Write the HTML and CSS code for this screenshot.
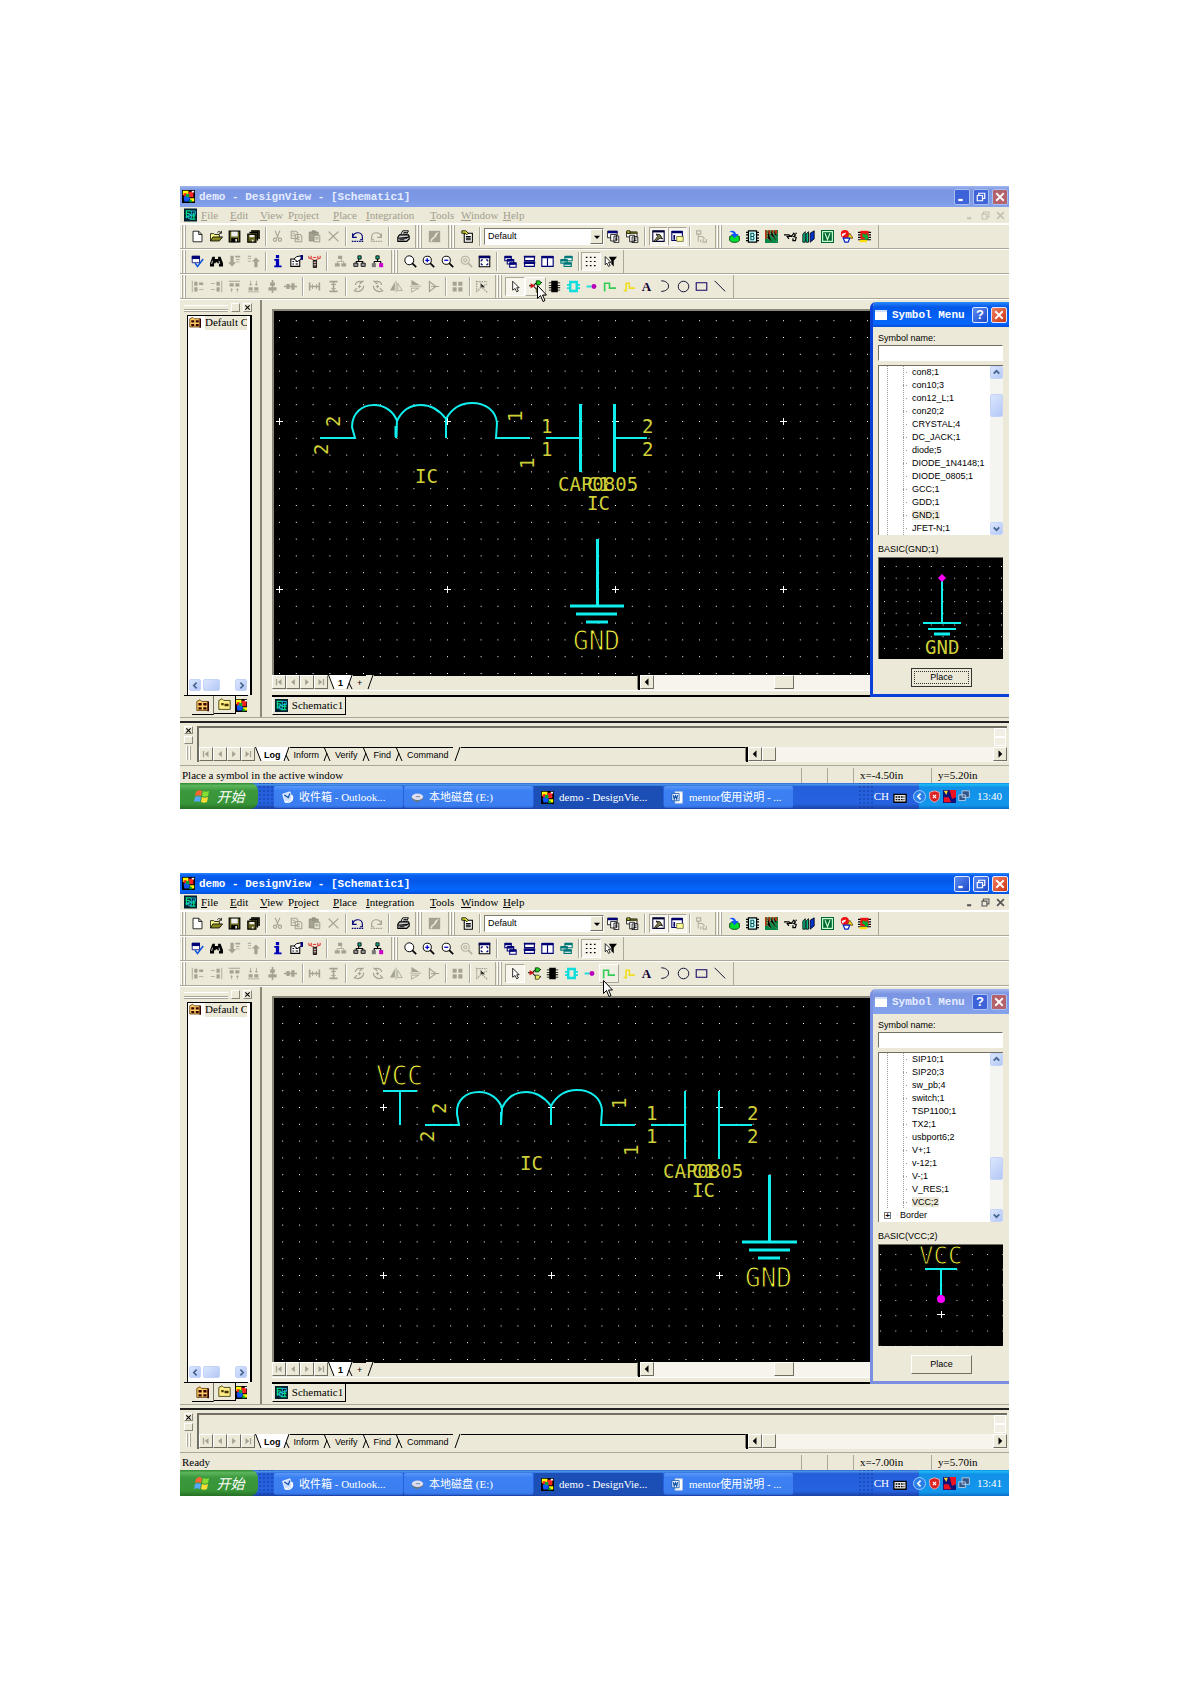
FILE: index.html
```html
<!DOCTYPE html>
<html lang="zh-CN">
<head>
<meta charset="utf-8">
<title>DesignView</title>
<link rel="stylesheet" href="styles.css">
</head>
<body>
<svg class="defs" aria-hidden="true">
  <defs>
    <pattern id="grid1" patternUnits="userSpaceOnUse" x="278" y="421" width="16.8" height="16.8"><rect width="1" height="1" fill="#fff"/></pattern>
    <pattern id="grid2" patternUnits="userSpaceOnUse" x="382" y="420" width="16.8" height="16.8"><rect width="1" height="1" fill="#fff"/></pattern>
    <pattern id="grid3" patternUnits="userSpaceOnUse" x="5" y="8" width="11.7" height="11.7"><rect width="1" height="1" fill="#ddd"/></pattern>
    <pattern id="grid4" patternUnits="userSpaceOnUse" x="1" y="9" width="15.3" height="15.3"><rect width="1" height="1" fill="#ddd"/></pattern>
  </defs>
  <symbol id="app" viewBox="0 0 16 16"><path fill="#000" d="M0 0h16v16H0z"/><path fill="#ff0" d="M1 1h7v5H1zM10 10h5v4h-5z"/><path fill="#f22" d="M8 2h6v7H8zM2 4h4v4H2z"/><path fill="#15f" d="M2 9l4-3 4 4-2 4H3z"/><path fill="#0a3" d="M5 5h4v4H5zM9 12h3v3H9z"/><path fill="#fff" d="M12 1h3v2h-3z"/></symbol>
  <symbol id="sch" viewBox="0 0 16 16"><path fill="#002030" d="M0 0h16v16H0z"/><path fill="none" stroke="#0d8" stroke-width="1.5" d="M2 3h7M2 6h4l3 3h5M2 10h5M7 13h7M3 3v9M12 5v8"/><path fill="none" stroke="#2cf" d="M9 3h5v4H9zM5 8h4v4H5z"/></symbol>
  <symbol id="new" viewBox="0 0 16 16"><path fill="#fff" stroke="#000" d="M2.500 1.500h7l4 4v9h-11zM9.500 1.500v4h4"/></symbol>
  <symbol id="open" viewBox="0 0 16 16"><path fill="#ff8" stroke="#000" d="M.5 13.500v-9h4l1 1h6v3"/><path fill="#882" stroke="#000" d="M.5 13.500l3-5h12l-4 5z"/><path fill="none" stroke="#000" d="M9 3c2-2 4-1 5 1M14 1v3h-3"/></symbol>
  <symbol id="save" viewBox="0 0 16 16"><path fill="#662" stroke="#000" stroke-width="1.500" d="M1.500 1.500h13v13h-13z"/><path fill="#eee" d="M4 2h8v6H4z"/><path d="M4 10h8v5H4z"/><path fill="#eee" d="M9 11h2v3H9z"/></symbol>
  <symbol id="saveall" viewBox="0 0 16 16"><path fill="#662" stroke="#000" stroke-width="1.500" d="M5 1h10v10M3 3h10v10M1 5h10v10H1z"/><path fill="#eee" d="M3 6h6v3H3zM6 12h2v2H6z"/></symbol>
  <symbol id="cut" viewBox="0 0 16 16"><g fill="none" stroke="#a5a292" stroke-width="1.300"><path d="M5 1l4 9M11 1L7 10"/><circle cx="5" cy="12" r="2"/><circle cx="11" cy="12" r="2"/></g></symbol>
  <symbol id="copy" viewBox="0 0 16 16"><path fill="#ece9d8" stroke="#a5a292" stroke-width="1.300" d="M1.500 1.500h6l2 2v7h-8zM6.500 5.500h6l2 2v7h-8zM8 9h4M8 12h4M3 4h3M3 7h3"/></symbol>
  <symbol id="paste" viewBox="0 0 16 16"><path fill="#a5a292" stroke="#8e8b7c" d="M1.500 2.500h11v11h-11zM5 1h4v3H5z"/><path fill="#ece9d8" stroke="#8e8b7c" d="M7.500 6.500h7v8h-7zM9 9h4M9 11h4"/></symbol>
  <symbol id="del" viewBox="0 0 16 16"><path stroke="#a5a292" stroke-width="1.600" d="M2 2l12 12M14 2L2 13"/></symbol>
  <symbol id="undo" viewBox="0 0 16 16"><path fill="none" stroke="#007" stroke-width="1.400" d="M2 4v5h5M2 9c2-8 12-7 12 0v3h-3"/><path stroke="#007" stroke-dasharray="2 1" stroke-width="1.500" d="M1 14h14"/></symbol>
  <symbol id="redo" viewBox="0 0 16 16"><path fill="none" stroke="#a5a292" stroke-width="1.400" d="M14 4v5H9M14 9C12 1 2 2 2 9v3h3"/><path stroke="#a5a292" stroke-dasharray="2 1" stroke-width="1.500" d="M1 14h14"/></symbol>
  <symbol id="print" viewBox="0 0 16 16"><path fill="#fff" stroke="#000" stroke-width="1.200" d="M4 7l3-6h7l-3 6"/><path fill="#ccc" stroke="#000" stroke-width="1.400" d="M1 9l2-3h11l1 2v3l-3 3H1z"/><path stroke="#000" stroke-width="1.200" d="M1 10h11l3-2M8 3h4M7 5h4M3 12h6"/></symbol>
  <symbol id="pic" viewBox="0 0 16 16"><path fill="#a5a292" d="M1 1h14v14H1z"/><path fill="#ece9d8" d="M3 14c1-6 4-4 5-7 1-4 4-4 6-5-3 2-3 5-5 7s-4 2-4 5z"/></symbol>
  <symbol id="sheet" viewBox="0 0 16 16"><path fill="#fff" stroke="#000" stroke-width="1.300" d="M4 4h10v11H4z"/><path stroke="#000" stroke-width="1.300" d="M6 8h6M6 10h6M6 12h6"/><path fill="#dd3" stroke="#000" d="M1 1h5l3 3-2 2-2-2H1z"/></symbol>
  <symbol id="wins" viewBox="0 0 16 16"><path fill="#fff" stroke="#000" d="M.5 1.500h12v8H.5z"/><path fill="#007" d="M1 1h12v3H1z"/><path fill="#fff" stroke="#000" d="M4.500 5.500h7v8h-7zM8.500 7.500h6v8h-6zM10 10h3M10 12h3"/></symbol>
  <symbol id="wins2" viewBox="0 0 16 16"><path fill="#fff" stroke="#000" d="M.5 2.500h13v6H.5z"/><path fill="#552" d="M1 2h13v3H1z"/><path fill="#dd3" stroke="#000" d="M1 1h4v3H1z"/><path fill="#fff" stroke="#000" d="M4.500 6.500h6v8h-6zM7.500 8.500h7v7h-7zM9 11h4M9 13h4"/></symbol>
  <symbol id="nav" viewBox="0 0 16 16"><path fill="#fff" stroke="#003" stroke-width="1.300" d="M1 1h14v13H1z"/><path fill="#003" d="M1 1h14v2H1z"/><path fill="#885" stroke="#000" d="M5 5l5 1 3 5-3-1-6 4-1-1 4-5z"/></symbol>
  <symbol id="outp" viewBox="0 0 16 16"><path fill="#fff" stroke="#006" stroke-width="1.300" d="M1 2h13v11H1z"/><path fill="#006" d="M1 1h13v3H1zM3 6h2v6H3z"/><path fill="#ff9" stroke="#663" d="M7 8h8v6H7z"/></symbol>
  <symbol id="info" viewBox="0 0 16 16"><g fill="none" stroke="#b4b1a0" stroke-width="1.400"><path d="M2 1h5v4H2zM4 5v9M4 8h5l3 3M7 12v3M10 11v4h4v-4"/></g></symbol>
  <symbol id="disk" viewBox="0 0 16 16"><path fill="#0d3" stroke="#030" d="M2 8v5c2 3 10 3 12 0V8c-3-2-9-2-12 0z"/><path fill="#15f" d="M1 3c4-4 8-2 9 2h3l-5 5-4-5h3C6 3 4 2 1 3z"/></symbol>
  <symbol id="chipB" viewBox="0 0 16 16"><path stroke="#000" stroke-width="1.400" d="M0 3h16M0 6h16M0 10h16M0 13h16"/><path fill="#cff" stroke="#000" stroke-width="1.500" d="M3 1h10v14H3z"/><path fill="none" stroke="#055" stroke-width="1.300" d="M6 4h3l1 2-1 2H6zM6 8h3l1 2-1 2H6z"/></symbol>
  <symbol id="pcb" viewBox="0 0 16 16"><path fill="#084" d="M0 0h16v16H0z"/><path fill="#b31" d="M0 0h2v11H0zM4 0h2v6H4zM8 0h2v4H8zM12 0h3v5h-3z"/><path stroke="#fc9" stroke-dasharray="1 1" d="M3 0v10l5 5M11 0v5l4 4M7 0v6l7 8"/></symbol>
  <symbol id="gate" viewBox="0 0 16 16"><path fill="none" stroke="#000" stroke-width="1.500" d="M0 6h6l3 2H4l2 3M9 8l3-4 2 2-2 2 3 1-1 4h-3v-3M14 4h2"/></symbol>
  <symbol id="books" viewBox="0 0 16 16"><path fill="#0b8" stroke="#000" d="M1 5l3-3v13H1zM5 5l3-3v13H5z"/><path fill="#03c" stroke="#000" d="M10 4l5-3v10l-5 4z"/></symbol>
  <symbol id="vv" viewBox="0 0 16 16"><path fill="#063" d="M0 0h16v16H0z"/><path fill="none" stroke="#cfc" stroke-width="1.400" d="M2 2h12v12H2zM5 4l3 8 3-8"/></symbol>
  <symbol id="ball" viewBox="0 0 16 16"><circle cx="6" cy="5" r="5" fill="#e11"/><path fill="#fd2" stroke="#640" d="M9 10l3-6 4 6z"/><path fill="#fff" stroke="#02c" stroke-width="1.500" d="M4 10h8l-2 5H6z"/><path fill="#fff" d="M2 5l5-2v2L3 8z"/></symbol>
  <symbol id="chipR" viewBox="0 0 16 16"><path stroke="#000" stroke-width="1.400" d="M0 3h16M0 6h16M0 9h16M0 12h16"/><path fill="#e11" d="M3 1h10v10H3z"/><path fill="#fd0" d="M2 12h9v3H2z"/><path fill="#0a3" d="M6 4l4 2 1-3 2 8-5 1 1-2-4-2z"/></symbol>
  <symbol id="chk" viewBox="0 0 16 16"><path fill="#fff" stroke="#007" d="M1.500 1.500h9v8h-9z"/><path fill="#007" d="M1 1h10v4H1z"/><path fill="none" stroke="#15d" stroke-width="2" d="M5 10l3 4 7-9"/></symbol>
  <symbol id="find" viewBox="0 0 16 16"><path d="M3 2h3v3h4V2h3l3 8v4h-5v-4H9V9H7v1H5v4H0v-4z"/><path stroke="#fff" d="M3 7l-1 4M11 7l1 4"/></symbol>
  <symbol id="down" viewBox="0 0 16 16"><path fill="#a5a292" d="M3 1h4v8h3l-5 5-5-5h3zM9 1h6v2H9zM10 5h4v1h-4zM10 8h4v1h-4z"/></symbol>
  <symbol id="up" viewBox="0 0 16 16"><path fill="#a5a292" d="M9 15h4V8h3l-5-5-5 5h3zM1 1h4v1H1zM1 4h4v1H1zM1 7h4v1H1z"/></symbol>
  <symbol id="i" viewBox="0 0 16 16"><path fill="#00b" d="M6 0h4v4H6zM4 5h6v8h3v2H4v-2h2V7H4z"/></symbol>
  <symbol id="prop" viewBox="0 0 16 16"><path fill="#fff" stroke="#000" stroke-width="1.300" d="M1 5h11v9H1zM3 8h2M7 8h3M3 11h2M7 11h3"/><path fill="#fff" stroke="#000" stroke-width="1.200" d="M5 5l3-3 6-1v4l-5 3z"/><path fill="#007" d="M13 0h3v6h-3z"/></symbol>
  <symbol id="sig" viewBox="0 0 16 16"><path fill="none" stroke="#d33" stroke-width="1.200" d="M1 1v3h3V1M6 3h4M12 1v3h3V1M2 4l5 2M14 4l-4 2"/><path fill="#533" stroke="#000" d="M6.500 6.500h4v9h-4z"/><path stroke="#fff" d="M7 9h3M7 12h3"/></symbol>
  <symbol id="tree0" viewBox="0 0 16 16"><path fill="none" stroke="#a5a292" d="M9 5v3M4 11V8h8v3"/><path fill="#a5a292" d="M5 1h5v4H5zM1 10h6v4H1zM9 10h6v4H9z"/></symbol>
  <symbol id="tree1" viewBox="0 0 16 16"><path fill="none" stroke="#000" stroke-width="1.300" d="M7 5v3M4 11V8h8v3"/><path fill="#1a8" stroke="#000" d="M6 1h4v4H6z"/><path fill="#999" stroke="#000" d="M1 10h5v4H1zM10 10h5v4h-5z"/></symbol>
  <symbol id="tree2" viewBox="0 0 16 16"><path fill="none" stroke="#000" stroke-width="1.300" d="M8 5v3M4 11V8h8v3"/><path fill="#1a8" stroke="#000" d="M6 1h4v4H6z"/><path fill="#777" d="M1 10h5v5H1z"/><path fill="#c0c" d="M10 10h5v5h-5z"/></symbol>
  <symbol id="zoom" viewBox="0 0 16 16"><circle cx="6.500" cy="6.500" r="5.500" fill="#fff" stroke="#000" stroke-width="1.200"/><path stroke="#000" stroke-width="2" d="M10 10l5 5"/></symbol>
  <symbol id="zin" viewBox="0 0 16 16"><circle cx="6.500" cy="6.500" r="5" fill="#fff" stroke="#000" stroke-width="1.200"/><path stroke="#000" stroke-width="2" d="M10 10l5 5"/><path stroke="#00c" stroke-width="1.600" d="M4 6.500h5M6.500 4v5"/></symbol>
  <symbol id="zout" viewBox="0 0 16 16"><circle cx="6.500" cy="6.500" r="5" fill="#fff" stroke="#000" stroke-width="1.200"/><path stroke="#000" stroke-width="2" d="M10 10l5 5"/><path stroke="#00c" stroke-width="1.600" d="M4 6.500h5"/></symbol>
  <symbol id="zsel" viewBox="0 0 16 16"><g fill="none" stroke="#b4b1a0" stroke-width="1.300"><circle cx="6.500" cy="6.500" r="5"/><circle cx="6.500" cy="6.500" r="2"/><path stroke-width="2" d="M10 10l5 5"/></g></symbol>
  <symbol id="zfit" viewBox="0 0 16 16"><path fill="#fff" stroke="#000" stroke-width="1.300" d="M1.500 1.500h13v13h-13z"/><path fill="#006" d="M1 1h14v3H1z"/><path fill="none" stroke="#006" stroke-width="1.400" d="M4 6v2M4 6h2M12 6h-2M12 6v2M4 12h2M4 12v-2M12 12h-2M12 12v-2"/></symbol>
  <symbol id="casc" viewBox="0 0 16 16"><path fill="#fff" stroke="#007" stroke-width="1.300" d="M1 2h8v5H1zM4 6h8v5H4zM7 10h8v5H7z"/><path fill="#007" d="M1 1h8v3H1zM4 5h8v3H4zM7 9h8v3H7z"/></symbol>
  <symbol id="horz" viewBox="0 0 16 16"><path fill="#fff" stroke="#007" stroke-width="1.400" d="M2 2h12v5H2zM2 9h12v5H2z"/><path fill="#007" d="M1 1h14v2H1zM1 8h14v3H1z"/></symbol>
  <symbol id="vert" viewBox="0 0 16 16"><path fill="#fff" stroke="#007" stroke-width="1.400" d="M1 2h7v12H1zM8 2h7v12H8z"/><path fill="#007" d="M1 1h14v3H1z"/></symbol>
  <symbol id="arr" viewBox="0 0 16 16"><path fill="#fff" stroke="#077" stroke-width="1.300" d="M6 2h9v5H6zM1 6h8v4H1zM5 10h9v4H5z"/><path fill="#077" d="M6 1h9v3H6zM1 5h8v3H1zM5 9h9v3H5z"/></symbol>
  <symbol id="dots" viewBox="0 0 16 16"><path stroke="#000" stroke-width="1.500" stroke-dasharray="2 3" d="M1 3h14M1 8h14M1 13h14"/></symbol>
  <symbol id="filt" viewBox="0 0 16 16"><path fill="#fff" stroke="#000" d="M1.500 2v10l2-2 2 4 2-1-2-4h3z"/><path d="M6 2h10l-4 5v7l-3-3V7z"/></symbol>
  <symbol id="al1" viewBox="0 0 16 16"><path fill="#a5a292" d="M1 1h1v14H1zM4 2h4v5H4zM10 3h5v3h-5zM4 9h4v5H4zM10 11h5v1h-5z"/></symbol>
  <symbol id="al2" viewBox="0 0 16 16"><path fill="#a5a292" d="M14 1h1v14h-1zM8 2h4v5H8zM1 4h5v1H1zM8 9h4v5H8zM1 11h5v1H1z"/></symbol>
  <symbol id="al3" viewBox="0 0 16 16"><path fill="#a5a292" d="M1 1h14v1H1zM2 4h5v4H2zM9 4h5v4H9zM4 10h1v5H4zM11 10h1v5h-1zM3 11h3v1H3zM10 11h3v1h-3z"/></symbol>
  <symbol id="al4" viewBox="0 0 16 16"><path fill="#a5a292" d="M1 14h14v1H1zM2 9h5v4H2zM9 9h5v4H9zM4 1h1v6H4zM11 1h1v6h-1zM3 5h3v1H3zM10 5h3v1h-3z"/></symbol>
  <symbol id="al5" viewBox="0 0 16 16"><path fill="#a5a292" d="M7 0h2v16H7zM5 3h6v4H5zM3 9h10v4H3z"/></symbol>
  <symbol id="al6" viewBox="0 0 16 16"><path fill="#a5a292" d="M0 7h16v2H0zM3 5h4v6H3zM9 4h4v8H9z"/></symbol>
  <symbol id="sp1" viewBox="0 0 16 16"><path fill="#a5a292" d="M1 3h2v10H1zM13 3h2v10h-2zM3 7h10v2H3zM5 5h1v6H5zM10 5h1v6h-1z"/></symbol>
  <symbol id="sp2" viewBox="0 0 16 16"><path fill="#a5a292" d="M3 1h10v2H3zM3 13h10v2H3zM7 3h2v10H7zM5 5h6v1H5zM5 10h6v1H5z"/></symbol>
  <symbol id="rot1" viewBox="0 0 16 16"><path fill="none" stroke="#a5a292" stroke-width="1.500" d="M2 13c4 3 11 0 11-6M11 2C6 1 3 3 3 6M6 8h4M8 6v4M13 1L8 5M5 10l-4 4"/></symbol>
  <symbol id="rot2" viewBox="0 0 16 16"><path fill="none" stroke="#a5a292" stroke-width="1.500" d="M14 13c-4 3-11 0-11-6M5 2c5-1 8 1 8 4M6 8h4M8 6v4M3 1l5 4M11 10l4 4"/></symbol>
  <symbol id="fl1" viewBox="0 0 16 16"><path fill="#a5a292" d="M6 2v11H0zM7 1h1v14H7z"/><path fill="none" stroke="#a5a292" d="M9.500 4v9H15z"/></symbol>
  <symbol id="fl2" viewBox="0 0 16 16"><path fill="#a5a292" d="M3 0l10 6H3zM1 7h14v1H1z"/><path fill="none" stroke="#a5a292" d="M3 15l9-5H3z"/></symbol>
  <symbol id="fl3" viewBox="0 0 16 16"><path fill="none" stroke="#a5a292" stroke-width="1.500" d="M3 1v14M3 2l8 6-8 6M5 8h10"/></symbol>
  <symbol id="grp" viewBox="0 0 16 16"><path fill="#a5a292" d="M2 2h5v5H2zM9 2h5v5H9zM2 9h5v5H2zM9 9h5v5H9z"/></symbol>
  <symbol id="snap" viewBox="0 0 16 16"><path fill="none" stroke="#a5a292" stroke-width="1.500" stroke-dasharray="2 1" d="M2 1v14M2 2h13M15 15l-8-7M15 5L8 8l-5 6"/><path stroke="#a5a292" stroke-width="1.500" d="M7 4v5h5"/></symbol>
  <symbol id="ptr" viewBox="0 0 16 16"><path fill="#fff" stroke="#000" d="M4.500 1.500v11l3-2 2 4 2-1-2-4h3z"/></symbol>
  <symbol id="part" viewBox="0 0 16 16"><path fill="none" stroke="#000" stroke-width="1.300" d="M0 7h5M6 6l4-3M6 8l4 4M14 3h2M14 12h2"/><path fill="#c11" d="M2 4l6 3-6 3z"/><path fill="#2c2" stroke="#030" d="M9 1h4l2 2-2 3H9z"/><path fill="#ee6" stroke="#330" d="M9 10h4l2 2-2 3H9z"/></symbol>
  <symbol id="ic" viewBox="0 0 16 16"><path d="M4 1h8v14H4zM1 3h14v1H1zM1 6h14v1H1zM1 9h14v1H1zM1 12h14v1H1z"/></symbol>
  <symbol id="blk" viewBox="0 0 16 16"><path fill="none" stroke="#1dd" stroke-width="3" d="M4 2.500h8v11H4z"/><path stroke="#1dd" stroke-width="2" d="M0 6h3M0 10h3M13 6h3M13 10h3"/></symbol>
  <symbol id="pin" viewBox="0 0 16 16"><path stroke="#2dd" stroke-width="2.500" d="M2 8h6"/><circle cx="11" cy="8" r="3" fill="#b0b"/></symbol>
  <symbol id="net" viewBox="0 0 16 16"><path fill="none" stroke="#3c5" stroke-width="2" d="M2 14V4h6v6h8"/></symbol>
  <symbol id="bus" viewBox="0 0 16 16"><path fill="none" stroke="#ed2" stroke-width="2" d="M2 13h3V4h4v6h7"/></symbol>
  <symbol id="arc" viewBox="0 0 16 16"><path fill="none" stroke="#113" stroke-width="1.200" d="M4 1c12 0 12 13 0 13"/></symbol>
  <symbol id="circ" viewBox="0 0 16 16"><circle cx="8" cy="8" r="6.500" fill="none" stroke="#113" stroke-width="1.200"/></symbol>
  <symbol id="rect" viewBox="0 0 16 16"><path fill="none" stroke="#106" stroke-width="1.300" d="M1.500 3.500h13v9h-13z"/></symbol>
  <symbol id="line" viewBox="0 0 16 16"><path stroke="#113" stroke-width="1.200" d="M2 1l13 13"/></symbol>
  <symbol id="cursor" viewBox="0 0 10 17"><path fill="#fff" stroke="#000" d="M.5.5v13l3-3 2.500 6 2-1-2.500-5.500h4z"/></symbol>
  <symbol id="min" viewBox="0 0 16 16"><path stroke="currentColor" stroke-width="3" d="M3 12h6"/></symbol>
  <symbol id="rest" viewBox="0 0 16 16"><path fill="none" stroke="currentColor" stroke-width="1.600" d="M5 6V3h8v7h-3M3 6h7v7H3z"/></symbol>
  <symbol id="x" viewBox="0 0 16 16"><path stroke="currentColor" stroke-width="2.400" d="M3 3l10 10M13 3L3 13"/></symbol>
  <symbol id="first" viewBox="0 0 16 16"><path fill="#a5a292" d="M3 3h2v10H3zM12 3v10L6 8z"/></symbol>
  <symbol id="prev" viewBox="0 0 16 16"><path fill="#a5a292" d="M11 3v10L5 8z"/></symbol>
  <symbol id="next" viewBox="0 0 16 16"><path fill="#a5a292" d="M5 3v10l6-5z"/></symbol>
  <symbol id="last" viewBox="0 0 16 16"><path fill="#a5a292" d="M11 3h2v10h-2zM4 3v10l6-5z"/></symbol>
  <symbol id="tl" viewBox="0 0 16 16"><path fill="currentColor" d="M10 3v10L5 8z"/></symbol>
  <symbol id="tr" viewBox="0 0 16 16"><path fill="currentColor" d="M6 3v10l5-5z"/></symbol>
  <symbol id="td" viewBox="0 0 16 16"><path d="M3 6h10l-5 5z"/></symbol>
  <symbol id="cl" viewBox="0 0 16 16"><path fill="none" stroke="currentColor" stroke-width="3" d="M10 3L5 8l5 5"/></symbol>
  <symbol id="cr" viewBox="0 0 16 16"><path fill="none" stroke="currentColor" stroke-width="3" d="M6 3l5 5-5 5"/></symbol>
  <symbol id="cu" viewBox="0 0 16 16"><path fill="none" stroke="currentColor" stroke-width="3" d="M3 10l5-5 5 5"/></symbol>
  <symbol id="cd" viewBox="0 0 16 16"><path fill="none" stroke="currentColor" stroke-width="3" d="M3 6l5 5 5-5"/></symbol>
  <symbol id="sA" viewBox="0 0 8 14"><path fill="#fff" d="M0 0h8v14H6z"/><path stroke="#000" d="M.5 0L6 14"/></symbol>
  <symbol id="sB" viewBox="0 0 8 14"><path fill="#fff" d="M0 0h7L2 14H0z"/><path fill="none" stroke="#000" d="M7 0L2 14M4 8l3 6"/></symbol>
  <symbol id="sC" viewBox="0 0 8 14"><path fill="none" stroke="#000" d="M1 0l6 14M4 6L1 14M0 .5h8"/></symbol>
  <symbol id="sD" viewBox="0 0 8 14"><path stroke="#000" d="M7 0L2 14"/></symbol>
  <symbol id="book" viewBox="0 0 16 16"><path fill="#fc6" stroke="#530" d="M1 3l4-2 2 2h8v11H1z"/><path fill="#300" d="M3 5h4v3H3zM9 5h4v3H9zM3 10h4v3H3zM9 10h4v3H9zM14 3h2v12h-2z"/></symbol>
  <symbol id="fold" viewBox="0 0 16 16"><path fill="#fe8" stroke="#330" d="M1 3l4-2 2 2h8v11H1z"/><path fill="#430" d="M4 6h3v3H4zM8 7h5v3H8z"/></symbol>
  <symbol id="flag" viewBox="0 0 16 16"><path fill="#f63" d="M2 4c2-2 4-2 6-1L7 8c-2-1-4-1-6 0z"/><path fill="#8d3" d="M9 3c2 1 4 1 6 0l-1 5c-2 1-4 1-6 0z"/><path fill="#5af" d="M1 9c2-1 4-1 6 0l-1 5c-2-1-4-1-6 0z"/><path fill="#fd3" d="M8 9c2 1 4 1 6 0l-1 5c-2 1-4 1-6 0z"/></symbol>
  <symbol id="mail" viewBox="0 0 16 16"><path fill="#cdf" stroke="#fff" d="M2 4l9-3 3 9-9 4z"/><path fill="none" stroke="#15a" stroke-width="1.500" d="M4 5l5 3 2-5"/><path fill="none" stroke="#fff" stroke-width="2" d="M5 13c7 3 11-3 8-8"/></symbol>
  <symbol id="drive" viewBox="0 0 16 16"><path fill="#678" d="M1 7v3l6 4 8-4V7z"/><ellipse cx="8" cy="7" rx="7" ry="4" fill="#dde"/><path stroke="#678" d="M6 7h5"/></symbol>
  <symbol id="word" viewBox="0 0 16 16"><path fill="#fff" stroke="#bcd" d="M5 1h9v14H5z"/><path fill="#e8f0ff" stroke="#15a" d="M1 3h9v9H1z"/><path fill="none" stroke="#15a" stroke-width="1.500" d="M3 5l1 5 1.500-4L7 10l1-5"/></symbol>
  <symbol id="kbd" viewBox="0 0 16 16"><path fill="#e8e8e8" stroke="#000" stroke-width="1.500" d="M1 5h14v9H1z"/><path stroke="#000" stroke-width="1.500" stroke-dasharray="2 1" d="M3 8h10M3 11h10"/></symbol>
  <symbol id="shield" viewBox="0 0 16 16"><path fill="#d22" stroke="#fbb" d="M8 1l6 2v5c0 4-3 6-6 7-3-1-6-3-6-7V3z"/><path stroke="#fff" stroke-width="1.500" d="M6 6l4 4M10 6l-4 4"/></symbol>
  <symbol id="av" viewBox="0 0 16 16"><path fill="#117" d="M0 0h16v16H0z"/><path fill="#e12" d="M8 0h8v9l-5 2zM1 9h6l3 6H1z"/><path fill="#fd2" d="M1 1h5L4 6z"/></symbol>
  <symbol id="lan" viewBox="0 0 16 16"><path fill="#358" stroke="#cde" d="M5 1h9v8H5zM1 6h8v7H1z"/></symbol>
</svg>

<!-- chrome that every application window shares -->
<template id="top">
  <header class="title"><svg><use href="#app"/></svg><h2>demo - DesignView - [Schematic1]</h2>
    <div class="caps"><button aria-label="Minimize"><svg><use href="#min"/></svg></button><button aria-label="Restore"><svg><use href="#rest"/></svg></button><button class="close" aria-label="Close"><svg><use href="#x"/></svg></button></div></header>
  <nav class="menu"><svg><use href="#sch"/></svg><div class="items"><a href="#"><u>F</u>ile</a><a href="#"><u>E</u>dit</a><a href="#"><u>V</u>iew</a><a href="#">P<u>r</u>oject</a><a href="#"><u>P</u>lace</a><a href="#"><u>I</u>ntegration</a><a href="#"><u>T</u>ools</a><a href="#"><u>W</u>indow</a><a href="#"><u>H</u>elp</a></div>
    <div class="mdi"><button aria-label="Minimize sheet"><svg><use href="#min"/></svg></button><button aria-label="Restore sheet"><svg><use href="#rest"/></svg></button><button aria-label="Close sheet"><svg><use href="#x"/></svg></button></div></nav>
  <div class="tb"><i class="grip"></i><div class="g n4"><button aria-label="New"><svg><use href="#new"/></svg></button><button aria-label="Open"><svg><use href="#open"/></svg></button><button aria-label="Save"><svg><use href="#save"/></svg></button><button aria-label="Save all"><svg><use href="#saveall"/></svg></button></div><i class="sep"></i>
    <div class="g n4"><button aria-label="Cut"><svg><use href="#cut"/></svg></button><button aria-label="Copy"><svg><use href="#copy"/></svg></button><button aria-label="Paste"><svg><use href="#paste"/></svg></button><button aria-label="Delete"><svg><use href="#del"/></svg></button></div><i class="sep"></i>
    <div class="g n2"><button aria-label="Undo"><svg><use href="#undo"/></svg></button><button aria-label="Redo"><svg><use href="#redo"/></svg></button></div><i class="sep"></i>
    <div class="g n1 pad"><button aria-label="Print"><svg><use href="#print"/></svg></button></div><i class="grip mid"></i>
    <div class="g n1"><button aria-label="Picture"><svg><use href="#pic"/></svg></button></div><i class="grip mid far"></i>
    <div class="g n1"><button aria-label="Sheet"><svg><use href="#sheet"/></svg></button></div><i class="sep wide"></i>
    <div class="combo"><select aria-label="Scheme"><option>Default</option></select><span class="drop"><svg><use href="#td"/></svg></span></div>
    <div class="g n2"><button aria-label="Copy scheme"><svg><use href="#wins"/></svg></button><button aria-label="Edit scheme"><svg><use href="#wins2"/></svg></button></div><i class="sep wide"></i>
    <div class="g n2"><button class="on" aria-label="Navigator"><svg><use href="#nav"/></svg></button><button class="on" aria-label="Output"><svg><use href="#outp"/></svg></button></div><i class="sep"></i>
    <div class="g n1"><button aria-label="Info"><svg><use href="#info"/></svg></button></div><i class="grip mid far"></i>
    <div class="g n8"><button aria-label="Database"><svg><use href="#disk"/></svg></button><button aria-label="Block"><svg><use href="#chipB"/></svg></button><button aria-label="Board"><svg><use href="#pcb"/></svg></button><button aria-label="Gate"><svg><use href="#gate"/></svg></button><button aria-label="Library"><svg><use href="#books"/></svg></button><button aria-label="Verify"><svg><use href="#vv"/></svg></button><button aria-label="Analyze"><svg><use href="#ball"/></svg></button><button aria-label="Package"><svg><use href="#chipR"/></svg></button></div><i class="end"></i></div>
  <div class="tb"><i class="grip"></i><div class="g n4"><button aria-label="Check"><svg><use href="#chk"/></svg></button><button aria-label="Find"><svg><use href="#find"/></svg></button><button aria-label="Push"><svg><use href="#down"/></svg></button><button aria-label="Pop"><svg><use href="#up"/></svg></button></div><i class="sep"></i>
    <div class="g n3"><button aria-label="About"><svg><use href="#i"/></svg></button><button aria-label="Properties"><svg><use href="#prop"/></svg></button><button aria-label="Signals"><svg><use href="#sig"/></svg></button></div><i class="sep wide"></i>
    <div class="g n3"><button aria-label="Tree"><svg><use href="#tree0"/></svg></button><button aria-label="Tree up"><svg><use href="#tree1"/></svg></button><button aria-label="Tree down"><svg><use href="#tree2"/></svg></button></div><i class="grip mid far"></i>
    <div class="g n5"><button aria-label="Zoom"><svg><use href="#zoom"/></svg></button><button aria-label="Zoom in"><svg><use href="#zin"/></svg></button><button aria-label="Zoom out"><svg><use href="#zout"/></svg></button><button aria-label="Zoom selection"><svg><use href="#zsel"/></svg></button><button aria-label="Fit"><svg><use href="#zfit"/></svg></button></div><i class="sep wide"></i>
    <div class="g n4"><button aria-label="Cascade"><svg><use href="#casc"/></svg></button><button aria-label="Tile horizontally"><svg><use href="#horz"/></svg></button><button aria-label="Tile vertically"><svg><use href="#vert"/></svg></button><button aria-label="Arrange"><svg><use href="#arr"/></svg></button></div><i class="sep"></i>
    <div class="g n2"><button class="on" aria-label="Grid"><svg><use href="#dots"/></svg></button><button aria-label="Filter"><svg><use href="#filt"/></svg></button></div><i class="end"></i></div>
  <div class="tb"><i class="grip"></i><div class="g n6"><button aria-label="Align left"><svg><use href="#al1"/></svg></button><button aria-label="Align right"><svg><use href="#al2"/></svg></button><button aria-label="Align top"><svg><use href="#al3"/></svg></button><button aria-label="Align bottom"><svg><use href="#al4"/></svg></button><button aria-label="Align centre"><svg><use href="#al5"/></svg></button><button aria-label="Align middle"><svg><use href="#al6"/></svg></button></div><i class="sep"></i>
    <div class="g n2"><button aria-label="Space across"><svg><use href="#sp1"/></svg></button><button aria-label="Space down"><svg><use href="#sp2"/></svg></button></div><i class="sep wide"></i>
    <div class="g n5"><button aria-label="Rotate left"><svg><use href="#rot1"/></svg></button><button aria-label="Rotate right"><svg><use href="#rot2"/></svg></button><button aria-label="Flip"><svg><use href="#fl1"/></svg></button><button aria-label="Mirror"><svg><use href="#fl2"/></svg></button><button aria-label="Scale"><svg><use href="#fl3"/></svg></button></div><i class="sep"></i>
    <div class="g n1"><button aria-label="Group"><svg><use href="#grp"/></svg></button></div><i class="sep"></i>
    <div class="g n1"><button aria-label="Snap"><svg><use href="#snap"/></svg></button></div><i class="grip mid far"></i>
    <div class="g n12"><button class="on" aria-label="Select"><svg><use href="#ptr"/></svg></button><button data-tool="symbol" aria-label="Place symbol"><svg><use href="#part"/></svg></button><button aria-label="Device"><svg><use href="#ic"/></svg></button><button aria-label="Place block"><svg><use href="#blk"/></svg></button><button aria-label="Pin"><svg><use href="#pin"/></svg></button><button data-tool="net" aria-label="Net"><svg><use href="#net"/></svg></button><button aria-label="Bus"><svg><use href="#bus"/></svg></button><button class="letter">A</button><button aria-label="Arc"><svg><use href="#arc"/></svg></button><button aria-label="Circle"><svg><use href="#circ"/></svg></button><button aria-label="Rectangle"><svg><use href="#rect"/></svg></button><button aria-label="Line"><svg><use href="#line"/></svg></button></div><i class="end"></i></div>
</template>
<template id="side">
  <aside class="side">
    <div class="sidehead"><i class="bars"></i><button aria-label="Roll up"></button><button aria-label="Close panel"><svg><use href="#x"/></svg></button></div>
    <div class="tree"><p><svg><use href="#book"/></svg><span>Default C</span></p><div class="hs"><button aria-label="Left"><svg><use href="#cl"/></svg></button><b></b><button aria-label="Right"><svg><use href="#cr"/></svg></button></div></div>
    <div class="sidetabs"><button class="cur" aria-label="Blocks"><svg><use href="#book"/></svg></button><button aria-label="Files"><svg><use href="#fold"/></svg></button><button aria-label="Design"><svg><use href="#app"/></svg></button></div>
  </aside>
</template>
<template id="sheets">
  <div class="sheetbar"><div class="navs"><button aria-label="First sheet"><svg><use href="#first"/></svg></button><button aria-label="Previous sheet"><svg><use href="#prev"/></svg></button><button aria-label="Next sheet"><svg><use href="#next"/></svg></button><button aria-label="Last sheet"><svg><use href="#last"/></svg></button></div>
    <div class="tabs"><svg><use href="#sA"/></svg><button class="cur">1</button><svg><use href="#sB"/></svg><button>+</button><svg><use href="#sD"/></svg></div>
    <div class="track"><button aria-label="Scroll left"><svg><use href="#tl"/></svg></button><b></b></div></div>
  <div class="doctabs"><button><svg><use href="#sch"/></svg>Schematic1</button></div>
</template>
<template id="output">
  <div class="out">
    <div class="outgrip"><button aria-label="Close output"><svg><use href="#x"/></svg></button><button aria-label="Expand output"></button><i class="grip"></i></div>
    <div class="outbox"><div class="log"><div class="vs"><button aria-label="Up"></button><button aria-label="Down"></button></div></div>
      <div class="outtabs"><div class="navs"><button aria-label="First tab"><svg><use href="#first"/></svg></button><button aria-label="Previous tab"><svg><use href="#prev"/></svg></button><button aria-label="Next tab"><svg><use href="#next"/></svg></button><button aria-label="Last tab"><svg><use href="#last"/></svg></button></div>
        <div class="tabs"><svg><use href="#sA"/></svg><button class="cur">Log</button><svg><use href="#sB"/></svg><button>Inform</button><svg><use href="#sC"/></svg><button>Verify</button><svg><use href="#sC"/></svg><button>Find</button><svg><use href="#sC"/></svg><button>Command</button><svg><use href="#sD"/></svg></div>
        <div class="track"><button aria-label="Scroll output left"><svg><use href="#tl"/></svg></button><b></b><button aria-label="Scroll output right"><svg><use href="#tr"/></svg></button></div></div></div>
  </div>
</template>
<template id="tasks">
  <button class="start"><svg><use href="#flag"/></svg>开始</button><i class="qdots"></i><div class="tasks"><button><svg><use href="#mail"/></svg>收件箱 - Outlook...</button><button><svg><use href="#drive"/></svg>本地磁盘 (E:)</button><button class="cur"><svg><use href="#app"/></svg>demo - DesignVie...</button><button><svg><use href="#word"/></svg>mentor使用说明 - ...</button></div>
  <i class="qdots"></i><span class="lang">CH</span><svg class="kbd"><use href="#kbd"/></svg>
</template>

<main class="page">

<section class="screen idle" data-hover="symbol">
  <div class="slot" data-from="top"></div>
  <div class="work">
    <div class="slot" data-from="side"></div>
    <div class="doc">
      <svg class="canvas"><g transform="translate(-273 -311)"><rect x="273" y="311" width="1600" height="364" fill="url(#grid1)"/>
        <path class="cross" d="M275 421.500h7M278.500 418v7M443 421.500h7M446.500 418v7M611 421.500h7M614.500 418v7M779 421.500h7M782.500 418v7M275 589.500h7M278.500 586v7M443 589.500h7M446.500 586v7M611 589.500h7M614.500 586v7M779 589.500h7M782.500 586v7"/>
        <path class="wire" d="M319 438h35L351 427C351 413 361 405 373 405C384 405 393 412 396 421L395 438M395 438L396 421C401 410 410 405 420 405C431 405 439 411 445 419V438M445 419C451 408 460 403 471 403C485 403 495 411 496 423L495 438H529M545 438h34M613 438h33"/>
        <path class="wire fat" d="M395 426v11M579.500 404v68M613.500 404v68M596.500 539v67M569 606h54M575 614h41M585 622h22"/>
        <g class="cad"><text transform="translate(339 427) rotate(-90)">2</text><text transform="translate(327 455) rotate(-90)">2</text><text transform="translate(521 422) rotate(-90)">1</text><text transform="translate(533 469) rotate(-90)">1</text>
        <text x="540" y="433">1</text><text x="540" y="456">1</text><text x="641" y="433">2</text><text x="641" y="456">2</text><text x="414" y="483">IC</text><text x="557" y="491">CAP0805</text><text x="586" y="491">C1</text><text x="586" y="510">IC</text><text class="big" x="572" y="650">GND</text></g></g></svg>
      <div class="slot" data-from="sheets"></div>
    </div>
  </div>
  <div class="slot" data-from="output"></div>
  <footer class="status"><span class="msg">Place a symbol in the active window</span><span></span><span></span><span class="pos">x=-4.50in</span><span class="pos">y=5.20in</span></footer>
  <div class="taskbar"><div class="slot" data-from="tasks"></div><div class="tray"><button class="chev" aria-label="Show icons"><svg><use href="#cl"/></svg></button><svg><use href="#shield"/></svg><svg><use href="#av"/></svg><svg><use href="#lan"/></svg><time>13:40</time></div></div>

  <section class="dialog active">
    <header><i></i><h3>Symbol Menu</h3><button aria-label="Help">?</button><button class="close" aria-label="Close dialog"><svg><use href="#x"/></svg></button></header>
    <div class="body"><label for="sym1">Symbol name:</label><input id="sym1" type="text">
      <div class="list"><ul><li>con8;1</li><li>con10;3</li><li>con12_L;1</li><li>con20;2</li><li>CRYSTAL;4</li><li>DC_JACK;1</li><li>diode;5</li><li>DIODE_1N4148;1</li><li>DIODE_0805;1</li><li>GCC;1</li><li>GDD;1</li><li><mark>GND;1</mark></li><li>JFET-N;1</li></ul>
        <div class="vbar"><button aria-label="List up"><svg><use href="#cu"/></svg></button><b class="near"></b><button aria-label="List down"><svg><use href="#cd"/></svg></button></div></div>
      <p class="cap">BASIC(GND;1)</p>
      <svg class="preview"><rect width="400" height="101" fill="url(#grid3)"/><path class="wire" d="M63 21v44M44 65h38M49 71h28"/><path class="wire fat" d="M55 76h16"/><path fill="#f0f" d="M63 16l4 4-4 4-4-4z"/><g class="cad"><text x="46" y="96">GND</text></g></svg>
      <button class="place focus">Place</button></div>
  </section>
</section>

<section class="screen" data-hover="net">
  <div class="slot" data-from="top"></div>
  <div class="work">
    <div class="slot" data-from="side"></div>
    <div class="doc">
      <svg class="canvas"><g transform="translate(-273 -311)"><rect x="273" y="311" width="1600" height="364" fill="url(#grid2)"/>
        <path class="cross" d="M379 420.500h7M382.500 417v7M547 420.500h7M550.500 417v7M715 420.500h7M718.500 417v7M379 588.500h7M382.500 585v7M547 588.500h7M550.500 585v7M715 588.500h7M718.500 585v7"/>
        <path class="wire" d="M382 404h34M399 404v34"/>
        <path class="wire fat" d="M768.500 488v67M741 555h55M748 563h41M757 571h22"/>
        <g transform="translate(104 0)"><path class="wire" d="M320 438h34L352 427C351 413 361 405 374 405C385 405 394 412 397 421L396 438M396 438L397 421C402 410 411 405 421 405C432 405 440 411 446 419V438M446 419C452 408 461 403 472 403C486 403 496 411 497 423L496 438H530M546 438h34M614 438h33M580 404v68M614 404v68M396 425v12"/>
        <g class="cad"><text transform="translate(341 427) rotate(-90)">2</text><text transform="translate(329 455) rotate(-90)">2</text><text transform="translate(521 422) rotate(-90)">1</text><text transform="translate(533 469) rotate(-90)">1</text>
        <text x="541" y="433">1</text><text x="541" y="456">1</text><text x="642" y="433">2</text><text x="642" y="456">2</text><text x="415" y="483">IC</text><text x="558" y="491">CAP0805</text><text x="587" y="491">C1</text><text x="587" y="510">IC</text></g></g>
        <g class="cad"><text class="big" x="744" y="600">GND</text><text class="big" x="375" y="398">VCC</text></g></g></svg>
      <div class="slot" data-from="sheets"></div>
    </div>
  </div>
  <div class="slot" data-from="output"></div>
  <footer class="status"><span class="msg">Ready</span><span></span><span></span><span class="pos">x=-7.00in</span><span class="pos">y=5.70in</span></footer>
  <div class="taskbar"><div class="slot" data-from="tasks"></div><div class="tray"><button class="chev" aria-label="Show icons"><svg><use href="#cl"/></svg></button><svg><use href="#shield"/></svg><svg><use href="#av"/></svg><svg><use href="#lan"/></svg><time>13:41</time></div></div>

  <section class="dialog">
    <header><i></i><h3>Symbol Menu</h3><button aria-label="Help">?</button><button class="close" aria-label="Close dialog"><svg><use href="#x"/></svg></button></header>
    <div class="body"><label for="sym2">Symbol name:</label><input id="sym2" type="text">
      <div class="list"><ul><li>SIP10;1</li><li>SIP20;3</li><li>sw_pb;4</li><li>switch;1</li><li>TSP1100;1</li><li>TX2;1</li><li>usbport6;2</li><li>V+;1</li><li>v-12;1</li><li>V-;1</li><li>V_RES;1</li><li><mark>VCC;2</mark></li><li class="root"><b>+</b>Border</li></ul>
        <div class="vbar"><button aria-label="List up"><svg><use href="#cu"/></svg></button><b class="away"></b><button aria-label="List down"><svg><use href="#cd"/></svg></button></div></div>
      <p class="cap">BASIC(VCC;2)</p>
      <svg class="preview"><rect width="400" height="101" fill="url(#grid4)"/><path class="wire" d="M46 24h32M62 24v26"/><circle cx="62" cy="54" r="4" fill="#f0f"/><path class="cross" d="M58 69.500h8M62.500 66v7"/><g class="cad"><text class="big" x="40" y="19">VCC</text></g></svg>
      <button class="place">Place</button></div>
  </section>
</section>
</main>
<script src="script.js"></script>
</body>
</html>
```
FILE: script.js
```js
// Fill each slot with the shared window chrome.
document.querySelectorAll('.slot').forEach(slot => {
  slot.replaceWith(document.getElementById(slot.dataset.from).content.cloneNode(true));
});

// Raise the tool under the pointer and draw the pointer over it.
document.querySelectorAll('.screen').forEach(screen => {
  const tool = screen.querySelector('[data-tool="' + screen.dataset.hover + '"]');
  tool.classList.add('hover');
  tool.insertAdjacentHTML('beforeend', '<svg class="cursor"><use href="#cursor"/></svg>');
});
```
FILE: styles.css
```css
* { box-sizing: border-box; }
body { margin: 0; background: #fff; }
.defs { position: absolute; width: 0; height: 0; }
h2, h3, p, ul { margin: 0; padding: 0; }
button { margin: 0; padding: 0; border: 0; background: none; color: inherit; font: inherit; display: flex; align-items: center; justify-content: center; }
svg { flex: none; display: block; }

.page { padding: 186px 183px 190px 180px; display: flex; flex-direction: column; gap: 64px; }
.screen { position: relative; display: flex; flex-direction: column; overflow: hidden; background: #ece9d8; color: #000; font: 11px/13px "Liberation Serif", "Noto Sans CJK SC", serif; }

/* title bar */
.title { height: 21px; display: flex; align-items: center; gap: 4px; padding: 0 1px 0 2px; color: #fff; background: linear-gradient(#2a8bff 0, #0a5ff0 12%, #0458e8 40%, #0567ff 80%, #0450d8 100%); }
.idle .title { color: #e4ecff; background: linear-gradient(#9fb6ee 0, #7b95e2 20%, #7d9ae6 70%, #84a2ec 100%); }
.title > svg { width: 13px; height: 13px; }
.title h2, .dialog h3 { flex: 1; font: bold 11px/20px "Liberation Mono", monospace; white-space: nowrap; }
.caps { display: flex; gap: 3px; }
.caps button, .dialog header button { width: 16px; height: 16px; border: 1px solid #dfe8ff; border-radius: 2px; background: linear-gradient(135deg, #5c8cf4, #1c48c8); color: #fff; }
.caps svg, .dialog header svg { width: 12px; height: 12px; }
.title .close, .dialog header .close { background: linear-gradient(135deg, #f08060, #cc3510); }
.idle .caps button, .dialog:not(.active) header button { border-color: #a9bff2; background: #3e63d8; }
.idle .caps .close, .dialog:not(.active) header .close { background: #b4626c; }

/* menu bar */
.menu { height: 17px; display: flex; align-items: center; padding: 0 3px 0 4px; border-bottom: 1px solid #fff; }
.menu > svg { width: 13px; height: 14px; margin-right: 4px; }
.items { flex: 1; display: grid; grid-template-columns: 29px 30px 28px 45px 33px 64px 31px 42px 30px; }
.items a { color: inherit; text-decoration: none; }
.idle .items { color: #a19e8f; }
.mdi { display: flex; gap: 4px; color: #555; }
.mdi svg { width: 11px; height: 11px; }
.idle .mdi { color: #c4c1b2; }

/* toolbars */
.tb { height: 25px; display: flex; align-items: stretch; border-top: 1px solid #fff; border-bottom: 1px solid #aca899; }
.grip { width: 8px; flex: none; background: linear-gradient(90deg, transparent 1px, #fff 1px 2px, #aca899 2px 3px, transparent 3px 4px, #fff 4px 5px, #aca899 5px 6px, transparent 6px); }
.grip.mid { width: 10px; border-left: 1px solid #aca899; }
.grip.far { margin-left: 4px; }
.g { display: flex; flex: none; align-items: center; }
.g button { flex: 1; height: 19px; position: relative; }
.g svg { width: 13px; height: 13px; }
.n1 { width: 19px; } .n2 { width: 38px; } .n3 { width: 56px; } .n4 { width: 75px; } .n5 { width: 93px; } .n6 { width: 112px; } .n8 { width: 149px; } .n12 { width: 224px; }
.pad { width: 24px; }
.sep { flex: none; width: 5px; background: linear-gradient(90deg, transparent 2px, #aca899 2px 3px, #fff 3px 4px, transparent 4px); margin: 2px 0; }
.sep.wide { width: 7px; }
.end { width: 5px; border-right: 1px solid #aca899; }
.g .on { background: #f7f5ec; border: 1px solid #aca899; border-right-color: #fff; border-bottom-color: #fff; }
.g .hover { background: #f1efe4; border: 1px solid #fff; border-right-color: #aca899; border-bottom-color: #aca899; }
.letter { color: #103; font-weight: bold; font-size: 13px; }
.g .cursor { position: absolute; z-index: 2; left: 11px; top: 7px; width: 10px; height: 17px; }
.g [data-tool="net"] .cursor { left: 3px; top: 15px; }
.combo { width: 120px; height: 17px; align-self: center; display: flex; border: 1px solid #7f7c70; border-right-color: #fff; border-bottom-color: #fff; background: #fff; }
.combo select { flex: 1; min-width: 0; appearance: none; border: 0; background: #fff; padding: 0 3px; color: #000; font: 9px/13px "Liberation Sans", sans-serif; }
.drop { width: 13px; background: #ece9d8; border: 1px solid #fff; border-right-color: #716f64; border-bottom-color: #716f64; display: flex; align-items: center; justify-content: center; }
.drop svg { width: 10px; height: 10px; }

/* work area */
.work { display: flex; border-top: 1px solid #fff; }
.side { width: 82px; flex: none; display: flex; flex-direction: column; border-right: 2px solid #8b887a; padding-left: 4px; }
.sidehead { height: 15px; display: flex; align-items: center; gap: 3px; padding-right: 8px; }
.bars { flex: 1; height: 6px; border: solid #fff; border-width: 1px 0; box-shadow: 0 1px #aca899, inset 0 -1px #aca899; }
.sidehead button { width: 9px; height: 9px; border: 1px solid #fff; border-right-color: #8b887a; border-bottom-color: #8b887a; }
.sidehead svg { width: 7px; height: 7px; }
.tree { flex: 1; margin: 0 8px 0 3px; background: #fff; border: solid #000; border-width: 1px 2px 0 1px; display: flex; flex-direction: column; justify-content: space-between; padding: 0 3px 4px 1px; }
.tree p { display: flex; height: 14px; gap: 4px; overflow: hidden; white-space: nowrap; }
.tree p svg { width: 12px; height: 13px; }
.tree p span { background: #ece9d8; flex: none; width: 44px; overflow: hidden; }
.hs { display: flex; gap: 2px; }
.hs button, .hs b, .vbar button, .vbar b { color: #46648f; background: linear-gradient(135deg, #dbe6ff, #b4c8f6); border: 1px solid #c4d3f8; border-radius: 2px; }
.hs button { width: 12px; height: 12px; }
.hs b { width: 17px; height: 12px; margin-right: auto; }
.hs svg, .vbar svg { width: 9px; height: 9px; }
.sidetabs { display: flex; height: 21px; margin: 0 12px 1px 0; padding-left: 8px; border-top: 1px solid #000; }
.sidetabs button { width: 22px; height: 18px; border-bottom: 1px solid #000; border-right: 1px solid #000; }
.sidetabs .cur { height: 19px; border-right-color: #716f64; }
.sidetabs button:last-child { width: 11px; border: 0; overflow: hidden; }
.sidetabs svg { width: 13px; height: 13px; }
.doc { flex: 1; min-width: 0; padding: 9px 0 0 10px; }
.canvas { width: 100%; height: 366px; background: #000; border: solid #8b887a; border-width: 2px 0 0 2px; }
.cross { stroke: #fff; stroke-width: 1; fill: none; }
.wire { stroke: #1ee; stroke-width: 2; fill: none; }
.wire.fat { stroke-width: 3; }
.cad text { font: 19px "DejaVu Sans Mono", monospace; fill: #cfcf38; }
.cad .big { font-size: 26px; fill: #f2f23a; stroke: #000; stroke-width: 1px; }
.preview .cad .big { font-size: 24px; }

.sheetbar { height: 16px; display: flex; margin-bottom: 4px; border-bottom: 1px solid #fff; }
.navs { display: flex; flex: none; }
.navs button { width: 14px; height: 14px; border: 1px solid #fff; border-right-color: #716f64; border-bottom-color: #716f64; }
.navs svg { width: 10px; height: 10px; }
.tabs { display: flex; flex: none; font: 9px/14px "Liberation Sans", sans-serif; height: 14px; }
.tabs svg { width: 8px; height: 14px; }
.tabs button { padding: 0 4px; border-top: 1px solid #000; }
.tabs .cur { background: #fff; font-weight: bold; border-color: #fff; padding: 0 1px; }
.sheetbar .tabs { width: 310px; }
.sheetbar .cur { padding: 0 2px; }
.sheetbar .tabs::after, .outtabs .tabs::after { content: ""; flex: 1; border-top: 1px solid #000; border-right: 1px solid #8b887a; }
.track { flex: 1; display: flex; background: #f6f4ec; border-left: 2px solid #000; }
.track button, .track b { width: 14px; height: 14px; background: #ece9d8; border: 1px solid #fff; border-right-color: #716f64; border-bottom-color: #716f64; }
.track svg { width: 12px; height: 12px; }
.sheetbar b { width: 20px; margin-left: 120px; }
.doctabs { height: 22px; border-top: 2px solid #000; }
.doctabs button { width: 74px; height: 18px; gap: 4px; border: solid #000; border-width: 0 1px 1px 0; border-left: 1px solid #fff; background: #ece9d8; }
.doctabs svg { width: 13px; height: 13px; }

/* output pane */
.out { position: relative; display: flex; border-top: 1px solid #aca899; padding: 3px 2px 3px 0; }
.out::before { content: ""; position: absolute; left: 0; right: 0; top: 3px; height: 2px; background: #222; }
.outgrip { width: 17px; flex: none; display: flex; flex-direction: column; align-items: center; gap: 2px; padding-top: 5px; }
.outgrip button { width: 9px; height: 8px; border: 1px solid #fff; border-right-color: #8b887a; border-bottom-color: #8b887a; }
.outgrip button svg { width: 7px; height: 7px; }
.outgrip .grip { height: 14px; }
.outbox { flex: 1; margin-top: 5px; border: 2px solid #716f64; border-right: 0; border-bottom: 0; }
.log { height: 19px; display: flex; justify-content: flex-end; padding: 0 1px; }
.vs button { width: 12px; height: 9px; border: 1px solid #fff; background: #f1efe4; }
.outtabs { height: 15px; display: flex; }
.outtabs .tabs { width: 491px; }
.outtabs .track b { margin-right: auto; }

.status { height: 18px; display: flex; align-items: stretch; border-top: 1px solid #aca899; font-size: 11px; }
.status span { width: 26px; border-left: 1px solid #aca899; margin: 2px 0 0; line-height: 14px; white-space: nowrap; }
.status .msg { flex: 1; border: 0; padding-left: 2px; }
.status .pos { width: 78px; padding-left: 6px; }

/* taskbar */
.taskbar { height: 26px; display: flex; align-items: stretch; color: #fff; background: linear-gradient(#3168d5 0, #4993e6 6%, #245edb 14%, #2663e0 80%, #1941a5 100%); }
.start { width: 78px; flex: none; gap: 7px; font: italic 14px/20px "Noto Sans CJK SC", sans-serif; border-radius: 0 8px 8px 0; background: linear-gradient(#2f8a2f 0, #5cb55c 10%, #3c983c 30%, #379437 80%, #256f25 100%); }
.start svg { width: 16px; height: 16px; }
.qdots { width: 16px; flex: none; background: radial-gradient(circle, #143a9c 1px, transparent 1px) 4px 2px / 4px 4px; opacity: .5; }
.tasks { flex: 1; display: flex; gap: 1px; padding: 3px 0 1px; }
.tasks button { flex: 0 1 129px; min-width: 0; justify-content: flex-start; gap: 5px; padding-left: 7px; border-radius: 2px; background: linear-gradient(#5a97f8, #3c81f3 20%, #3a7df0 90%, #2a62cf); white-space: nowrap; overflow: hidden; }
.tasks .cur { background: #1c4fb5; }
.tasks svg { width: 13px; height: 13px; }
.lang { align-self: center; }
.kbd { width: 14px; height: 14px; align-self: center; margin: 2px 12px 0 4px; }
.tray { width: 90px; flex: none; display: flex; align-items: center; gap: 2px; background: linear-gradient(#0f8ae8 0, #19b9f3 6%, #1290e8 16%, #1297ec 85%, #0c6dc4 100%); }
.tray svg { width: 13px; height: 13px; }
.chev { width: 13px; height: 13px; margin-left: -6px; border-radius: 50%; background: #2a7fe8; border: 1px solid #9cf; }
.chev svg { width: 9px; height: 9px; }
.tray time { margin-left: 4px; }

/* floating symbol dialog */
.dialog { position: absolute; right: 0; top: 116px; width: 139px; border: solid #7b8fe0; border-width: 0 0 3px 3px; border-radius: 6px 0 0 0; background: #ece9d8; font: 9px/13px "Liberation Sans", sans-serif; overflow: hidden; }
.dialog.active { border-color: #0a3fd8; }
.dialog header { height: 25px; display: flex; align-items: center; gap: 3px; padding: 0 2px; color: #e4ecff; background: linear-gradient(#9fb6ee 0, #7b95e2 20%, #84a2ec 100%); }
.dialog.active header { color: #fff; background: linear-gradient(#2a8bff 0, #0458e8 20%, #0567ff 85%, #0450d8 100%); }
.dialog header i { width: 12px; height: 10px; background: #fff; border-top: 2px solid #cfe0ff; }
.dialog h3 { margin-left: 2px; }
.dialog header button { font: bold 13px/14px "Liberation Sans", sans-serif; }
.body { padding: 5px 6px 7px 5px; display: flex; flex-direction: column; }
.body input { height: 16px; width: 100%; margin: 0 0 4px; border: 1px solid #fff; border-top-color: #716f64; border-left-color: #716f64; background: #fff; padding: 0; }
.list { display: flex; background: #fff; border: solid #716f64; border-width: 1px 0 0 1px; }
.list ul { flex: 1; list-style: none; background: linear-gradient(#999 50%, transparent 50%) 8px 0 / 1px 2px repeat-y, linear-gradient(#999 50%, transparent 50%) 24px 0 / 1px 2px repeat-y; }
.list li { height: 13px; padding-left: 33px; white-space: nowrap; background: linear-gradient(90deg, #999 50%, transparent 50%) 24px 6px / 2px 1px no-repeat, linear-gradient(90deg, #999 50%, transparent 50%) 27px 6px / 2px 1px no-repeat; }
.list mark { background: #ece9d8; color: inherit; }
.list .root { padding-left: 5px; display: flex; align-items: center; gap: 9px; background: #fff; }
.root b { width: 7px; height: 7px; border: 1px solid #777; font-size: 8px; line-height: 5px; text-align: center; }
.vbar { width: 13px; display: flex; flex-direction: column; background: #f4f4f0; }
.vbar button { height: 13px; }
.vbar b { height: 23px; }
.vbar .near { margin: 15px 0 auto; }
.vbar .away { margin: auto 0 29px; }
.cap { margin: 8px 0 1px; }
.preview { width: 100%; height: 102px; background: #000; border: solid #716f64; border-width: 1px 0 0 1px; }
.place { width: 61px; height: 19px; margin: 9px 0 0 33px; border: 1px solid #fff; border-right-color: #716f64; border-bottom-color: #716f64; }
.place.focus { border-color: #333; outline: 1px dotted #333; outline-offset: -4px; }
```
